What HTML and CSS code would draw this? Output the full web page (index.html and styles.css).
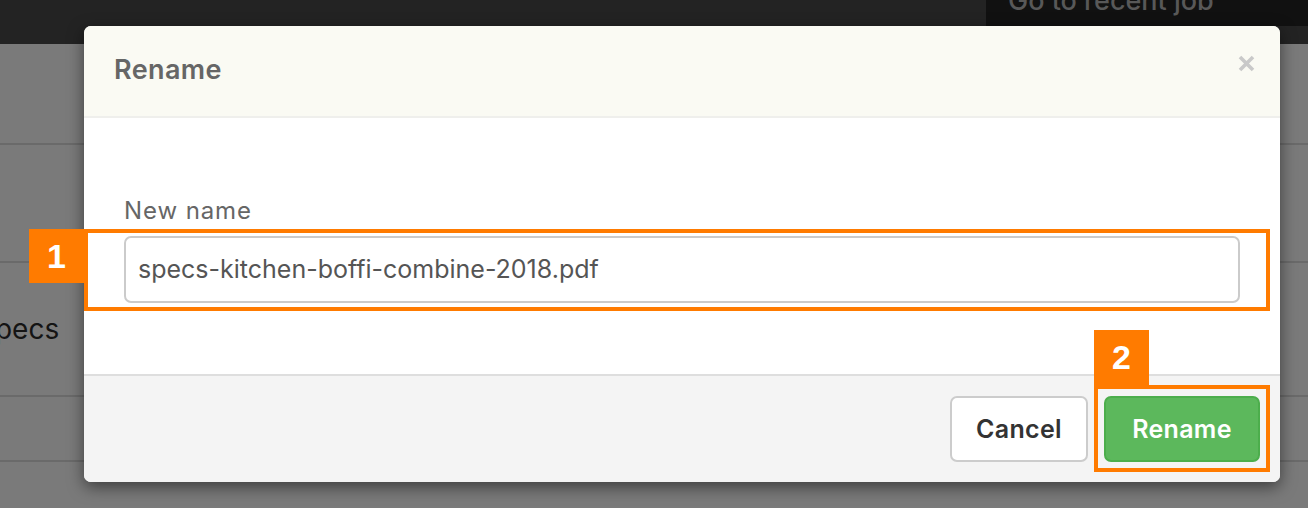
FILE: index.html
```html
<!DOCTYPE html>
<html>
<head>
<meta charset="utf-8">
<link rel="stylesheet" href="styles.css">
</head>
<body>
<div class="page">
  <div class="topbar">
    <div class="recent"><span class="recent-text">Go to recent job</span></div>
  </div>
  <div class="row r1"></div>
  <div class="row r2"></div>
  <div class="row r3"><span class="spec-text">Specs</span></div>
  <div class="row r4"></div>
  <div class="row r5"></div>
</div>

<div class="modal">
  <div class="modal-header">
    <h4 class="modal-title">Rename</h4>
    <svg class="close" width="17" height="17" viewBox="0 0 17 17"><path d="M2 2 L15 15 M15 2 L2 15" stroke="#c9c9c9" stroke-width="3.6" stroke-linecap="butt"/></svg>
  </div>
  <div class="modal-body">
    <label class="label">New name</label>
    <input class="field" type="text" value="specs-kitchen-boffi-combine-2018.pdf">
  </div>
  <div class="modal-footer">
    <button class="btn btn-default">Cancel</button>
    <button class="btn btn-success">Rename</button>
  </div>
</div>

<div class="mark box1"></div>
<div class="badge badge1">1</div>
<div class="badge badge2">2</div>
<div class="mark box2"></div>
</body>
</html>
```

FILE: styles.css
```css
html, body {
  margin: 0;
  padding: 0;
}
body {
  width: 1308px;
  height: 508px;
  overflow: hidden;
  background: #7a7a7a;
  font-family: Inter, Lato, "Liberation Sans", sans-serif;
  position: relative;
}
.page {
  display: flex;
  flex-direction: column;
}
.topbar {
  height: 44px;
  background: #232323;
  display: flex;
  justify-content: flex-end;
  align-items: flex-start;
}
.recent {
  width: 300px;
  height: 26px;
  background: #111;
  overflow: hidden;
  padding-left: 22px;
}
.recent-text {
  display: block;
  margin-top: -15px;
  font-size: 27px;
  line-height: 1.2;
  color: #585858;
  font-weight: 500;
  white-space: nowrap;
}
.row {
  border-bottom: 2px solid #6a6a6a;
  box-sizing: border-box;
}
.r1 { height: 101px; }
.r2 { height: 118px; }
.r3 {
  height: 134px;
  display: flex;
  align-items: flex-start;
}
.r4 { height: 65px; }
.r5 { height: 46px; border-bottom: none; }
.spec-text {
  font-size: 28px;
  line-height: 1.2;
  color: #141414;
  margin-top: 50px;
  margin-left: -23px;
}

.modal {
  position: absolute;
  left: 84px;
  top: 26px;
  width: 1196px;
  height: 456px;
  background: #fff;
  border-radius: 7px;
  box-shadow: 0 5px 16px rgba(0, 0, 0, 0.5);
  overflow: hidden;
  display: flex;
  flex-direction: column;
}
.modal-header {
  height: 64px;
  background: #fafaf3;
  border-bottom: 2px solid #efefec;
  position: relative;
  padding: 26px 30px 0;
}
.modal-title {
  margin: 0;
  font-size: 27px;
  line-height: 1.2;
  font-weight: 600;
  letter-spacing: 0.4px;
  color: #666;
  padding-top: 2px;
}
.close {
  position: absolute;
  right: 25px;
  top: 29px;
}
.modal-body {
  flex: 1;
  padding: 79px 40px 0;
  display: flex;
  flex-direction: column;
}
.label {
  font-size: 24px;
  line-height: 1.2;
  letter-spacing: 0.9px;
  color: #666;
}
.field {
  margin: 10px 0 0;
  height: 67px;
  box-sizing: border-box;
  border: 2px solid #cbcbcb;
  border-radius: 7px;
  padding: 0 12px;
  font-family: Inter, Lato, "Liberation Sans", sans-serif;
  font-size: 25px;
  color: #555;
  outline: none;
  width: 100%;
}
.modal-footer {
  height: 66px;
  padding: 20px;
  background: #f4f4f4;
  border-top: 2px solid #dedede;
  display: flex;
  justify-content: flex-end;
  gap: 16px;
}
.btn {
  height: 66px;
  box-sizing: border-box;
  border-radius: 7px;
  font-family: Inter, Lato, "Liberation Sans", sans-serif;
  font-size: 25px;
  font-weight: 600;
  letter-spacing: 0.3px;
  padding: 0;
}
.btn-default {
  width: 138px;
  background: #fff;
  border: 2px solid #cccccc;
  color: #333;
}
.btn-success {
  width: 156px;
  background: #5cb85c;
  border: 2px solid #4cae4c;
  color: #fff;
}

.mark {
  position: absolute;
  border: 4px solid #ff7b00;
  box-sizing: border-box;
}
.box1 {
  left: 84px;
  top: 229px;
  width: 1186px;
  height: 82px;
}
.box2 {
  left: 1094px;
  top: 385px;
  width: 176px;
  height: 87px;
}
.badge {
  position: absolute;
  background: #ff7b00;
  color: #fff;
  font-family: "Liberation Sans", Arial, sans-serif;
  font-weight: 700;
  font-size: 34px;
  display: flex;
  align-items: center;
  justify-content: center;
}
.badge1 {
  left: 29px;
  top: 229px;
  width: 55px;
  height: 54px;
}
.badge2 {
  left: 1094px;
  top: 330px;
  width: 55px;
  height: 55px;
}
```
